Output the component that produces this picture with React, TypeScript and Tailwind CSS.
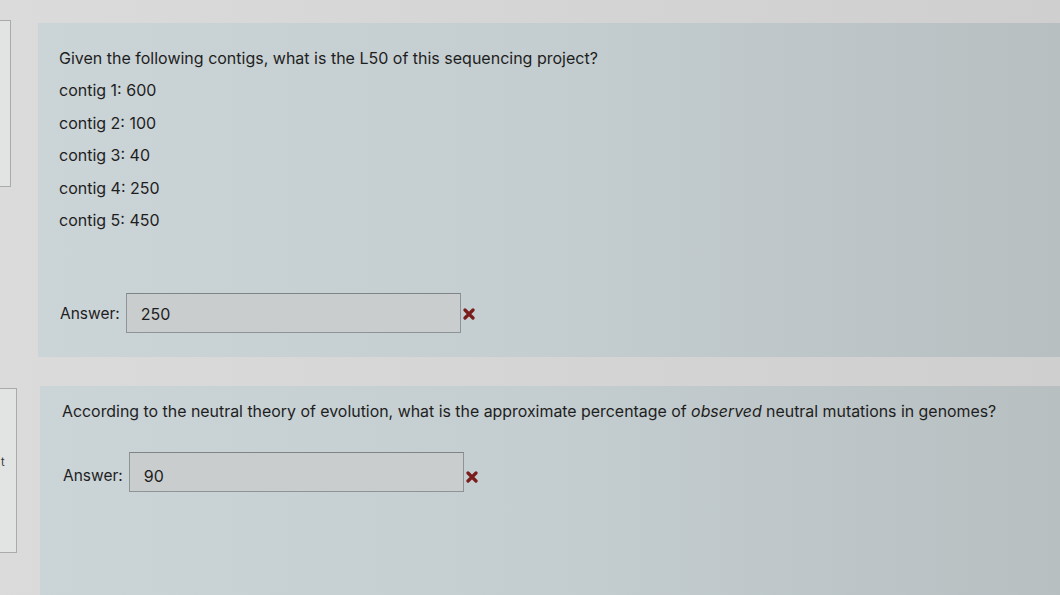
import React from "react";

function XMark() {
  return (
    <svg width="12" height="12" viewBox="0 0 12 12" className="shrink-0">
      <path d="M2 2 L10 10 M10 2 L2 10" stroke="#7a1c1a" strokeWidth="3.2" strokeLinecap="round" />
    </svg>
  );
}

function AnswerRow({ value, drop = 0 }: { value: string; drop?: number }) {
  return (
    <div className="flex items-center">
      <span className="text-[15.5px] text-[#1e1e1e] mr-[6px] relative" style={{ top: drop }}>
        Answer:
      </span>
      <div className="w-[335px] h-[40px] border border-[#8e9496] border-t-[#7f8587] bg-[#c9cdce] flex items-center pl-[14px] text-[16px] text-[#1e1e1e]">
        <span className="relative" style={{ top: drop }}>
          {value}
        </span>
      </div>
      <span className="ml-[2px] mt-[1px] relative" style={{ top: drop }}>
        <XMark />
      </span>
    </div>
  );
}

export default function App() {
  const contigs = ["contig 1: 600", "contig 2: 100", "contig 3: 40", "contig 4: 250", "contig 5: 450"];
  return (
    <div
      className="w-[1060px] h-[595px] overflow-hidden bg-linear-to-r from-[#dcdbdb] to-[#cfcfcf] pt-[20px] flex flex-col"
      style={{ fontFamily: "Inter, 'Open Sans', sans-serif" }}
    >
      <div className="flex items-start">
        <div className="w-[11px] h-[167px] shrink-0 border border-l-0 border-[#a9abab] bg-[#e2e3e3]" />
        <div className="ml-[27px] mt-[3px] flex-1 h-[334px] bg-linear-to-r from-[#cbd4d7] via-[#c4cdd0] to-[#b7bfc1] pl-[21px] pt-[19px]">
          <div className="text-[16px] text-[#1e1e1e] leading-[32px]">
            Given the following contigs, what is the L50 of this sequencing project?
          </div>
          {contigs.map((c) => (
            <div key={c} className="text-[16px] text-[#1e1e1e] leading-[32.6px]">
              {c}
            </div>
          ))}
          <div className="mt-[56px] ml-[1px]">
            <AnswerRow value="250" drop={1} />
          </div>
        </div>
      </div>
      <div className="flex items-start mt-[29px]">
        <div className="w-[17px] h-[165px] shrink-0 mt-[2px] border border-l-0 border-[#a9abab] bg-[#e2e3e3] relative">
          <span className="absolute left-[1px] top-[68px] text-[11px] text-[#333] leading-none">t</span>
        </div>
        <div className="ml-[23px] flex-1 h-[220px] bg-linear-to-r from-[#cbd4d7] via-[#c4cdd0] to-[#b7bfc1] pl-[22px] pt-[14px]">
          <div className="text-[15.9px] text-[#1e1e1e] leading-[24px]">
            According to the neutral theory of evolution, what is the approximate percentage of <i>observed</i> neutral
            mutations in genomes?
          </div>
          <div className="mt-[28px] ml-[1px]">
            <AnswerRow value="90" drop={4} />
          </div>
        </div>
      </div>
    </div>
  );
}
